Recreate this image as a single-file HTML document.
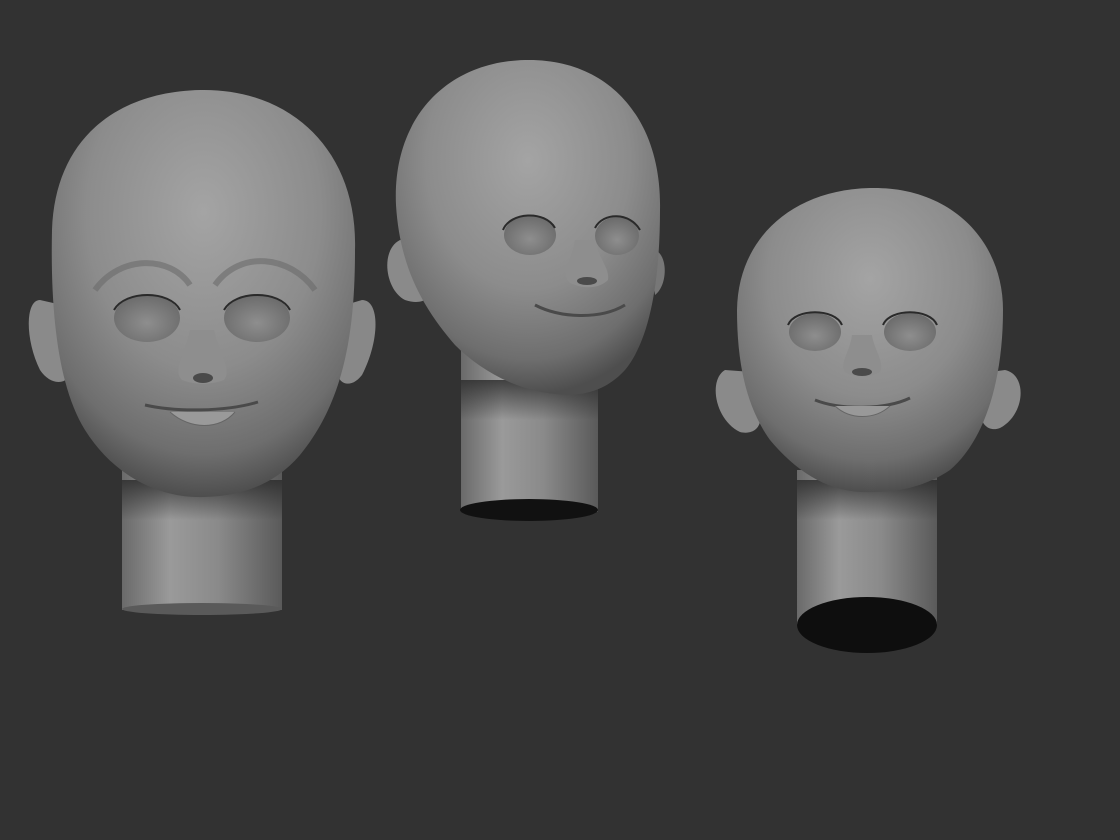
<!DOCTYPE html>
<html><head><meta charset="utf-8"><style>html,body{margin:0;padding:0;background:#323232;width:1120px;height:840px;overflow:hidden}</style></head>
<body>
<svg width="1120" height="840" viewBox="0 0 1120 840" xmlns="http://www.w3.org/2000/svg">
<defs>
<radialGradient id="hg" cx="0.5" cy="0.3" r="0.7">
<stop offset="0" stop-color="#a4a4a4"/><stop offset="0.55" stop-color="#8c8c8c"/><stop offset="0.85" stop-color="#6e6e6e"/><stop offset="1" stop-color="#4e4e4e"/></radialGradient>
<linearGradient id="ng" x1="0" x2="1" y1="0" y2="0">
<stop offset="0" stop-color="#6a6a6a"/><stop offset="0.3" stop-color="#9a9a9a"/><stop offset="0.6" stop-color="#8a8a8a"/><stop offset="1" stop-color="#5a5a5a"/></linearGradient>
<radialGradient id="eg" cx="0.5" cy="0.6" r="0.6"><stop offset="0" stop-color="#8e8e8e"/><stop offset="1" stop-color="#6a6a6a"/></radialGradient>
<linearGradient id="cs" x1="0" x2="0" y1="0" y2="1"><stop offset="0" stop-color="#2a2a2a" stop-opacity="0.8"/><stop offset="1" stop-color="#2a2a2a" stop-opacity="0"/></linearGradient>
</defs>
<!-- Head 1 -->
<rect x="122" y="455" width="160" height="155" fill="url(#ng)"/>
<ellipse cx="202" cy="609" rx="80" ry="6" fill="#5a5a5a"/>
<rect x="122" y="480" width="160" height="40" fill="url(#cs)"/>
<path d="M40,300 C25,300 25,340 40,370 C50,385 65,385 70,375 L62,305Z" fill="#8a8a8a"/>
<path d="M362,300 C380,300 380,340 362,375 C352,388 340,385 338,375 L345,305Z" fill="#888"/>
<path d="M200,90 C290,88 358,150 355,250 C355,330 345,400 300,455 C270,490 230,498 195,497 C150,495 110,470 85,430 C60,390 50,320 52,230 C55,140 115,92 200,90Z" fill="url(#hg)"/>
<path d="M95,290 C120,255 170,255 190,285 M215,285 C240,250 290,255 315,290" stroke="#6a6a6a" stroke-width="6" fill="none" opacity="0.6"/>
<ellipse cx="147" cy="318" rx="33" ry="24" fill="url(#eg)"/>
<ellipse cx="257" cy="318" rx="33" ry="24" fill="url(#eg)"/>
<path d="M114,310 C125,290 170,290 180,310" stroke="#2a2a2a" stroke-width="2" fill="none"/>
<path d="M224,310 C235,290 280,290 290,310" stroke="#2a2a2a" stroke-width="2" fill="none"/>
<path d="M190,330 C185,355 172,370 182,380 C195,385 210,385 224,380 C232,370 220,355 214,330Z" fill="#8e8e8e"/>
<ellipse cx="203" cy="378" rx="10" ry="5" fill="#4a4a4a"/>
<path d="M145,405 C175,412 225,412 258,402" stroke="#4a4a4a" stroke-width="3" fill="none"/>
<path d="M170,412 C190,430 220,430 235,412" fill="#9a9a9a" stroke="#666" stroke-width="1"/>
<!-- Head 2 -->
<rect x="461" y="340" width="137" height="172" fill="url(#ng)"/>
<rect x="461" y="380" width="137" height="40" fill="url(#cs)"/>
<ellipse cx="529" cy="510" rx="69" ry="11" fill="#111"/>
<path d="M400,240 C380,250 385,290 405,300 C420,305 430,300 432,290 L425,245Z" fill="#8a8a8a"/>
<path d="M655,250 C668,255 668,285 655,295 L650,255Z" fill="#777"/>
<path d="M525,60 C610,58 662,120 660,210 C660,280 650,340 625,370 C605,392 580,397 555,394 C515,390 480,370 455,345 C425,310 400,270 396,205 C392,120 445,62 525,60Z" fill="url(#hg)"/>
<ellipse cx="530" cy="235" rx="26" ry="20" fill="url(#eg)"/>
<ellipse cx="617" cy="236" rx="22" ry="19" fill="url(#eg)"/>
<path d="M503,230 C510,212 545,210 555,228" stroke="#2a2a2a" stroke-width="2" fill="none"/>
<path d="M595,228 C603,212 630,212 640,230" stroke="#2a2a2a" stroke-width="2" fill="none"/>
<path d="M575,240 C572,260 560,275 570,283 C585,290 600,288 608,280 C610,268 598,258 595,240Z" fill="#8e8e8e"/>
<ellipse cx="587" cy="281" rx="10" ry="4" fill="#4a4a4a"/>
<path d="M535,305 C560,318 600,320 625,305" stroke="#4a4a4a" stroke-width="3" fill="none"/>
<!-- Head 3 -->
<rect x="797" y="470" width="140" height="155" fill="url(#ng)"/>
<rect x="797" y="480" width="140" height="40" fill="url(#cs)"/>
<ellipse cx="867" cy="625" rx="70" ry="28" fill="#0e0e0e"/>
<path d="M725,370 C708,380 715,420 740,432 C752,435 760,428 760,420 L752,372Z" fill="#8a8a8a"/>
<path d="M1005,370 C1028,375 1025,415 1000,428 C990,432 982,425 982,418 L990,372Z" fill="#8a8a8a"/>
<path d="M870,188 C950,186 1003,240 1003,310 C1003,380 985,440 950,470 C920,490 890,493 860,492 C825,490 795,470 770,440 C745,405 737,360 737,310 C738,240 790,190 870,188Z" fill="url(#hg)"/>
<ellipse cx="815" cy="332" rx="26" ry="19" fill="url(#eg)"/>
<ellipse cx="910" cy="332" rx="26" ry="19" fill="url(#eg)"/>
<path d="M788,325 C795,308 835,308 842,325" stroke="#2a2a2a" stroke-width="2" fill="none"/>
<path d="M883,325 C890,308 930,308 937,325" stroke="#2a2a2a" stroke-width="2" fill="none"/>
<path d="M852,335 C850,352 838,365 846,373 C858,378 870,378 880,372 C885,362 874,350 872,335Z" fill="#8e8e8e"/>
<ellipse cx="862" cy="372" rx="10" ry="4" fill="#4a4a4a"/>
<path d="M815,400 C840,410 885,410 910,398" stroke="#4a4a4a" stroke-width="3" fill="none"/>
<path d="M835,406 C850,420 875,420 890,406" fill="#999" stroke="#666" stroke-width="1"/>
</svg>
</body></html>
